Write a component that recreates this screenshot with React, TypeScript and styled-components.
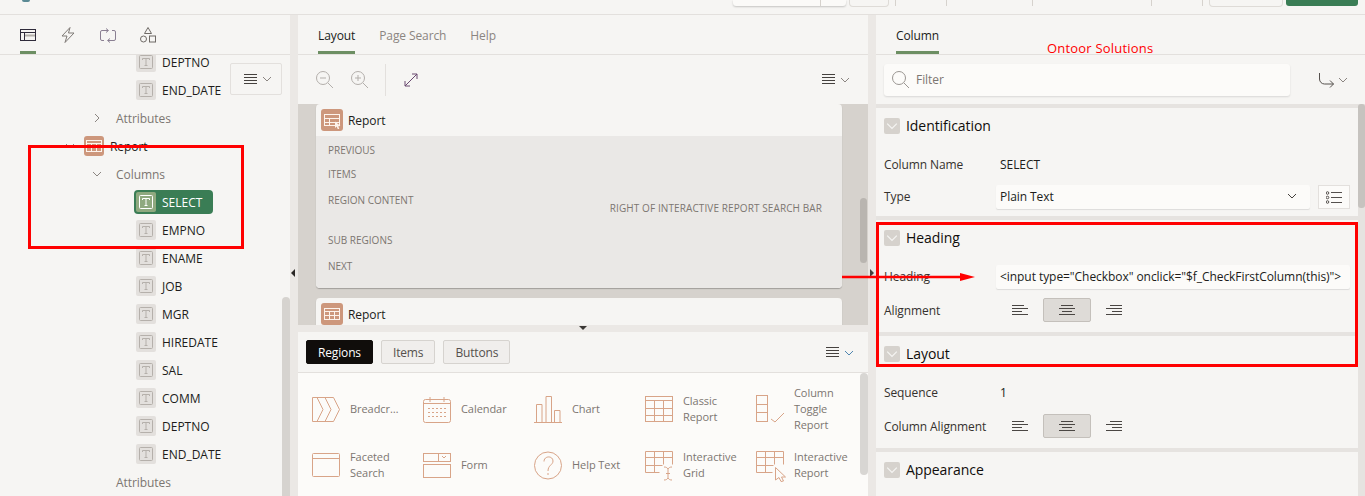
import React from "react";
import styled, { createGlobalStyle } from "styled-components";

const GlobalStyle = createGlobalStyle`
  html, body {
    margin: 0;
    padding: 0;
    background: #f6f5f3;
    font-family: "Open Sans", "Noto Sans", sans-serif;
    letter-spacing: -0.06px;
    overflow: hidden;
  }
  * { box-sizing: border-box; }
`;

const treeColumns = ["ENAME", "JOB", "MGR", "HIREDATE", "SAL", "COMM", "DEPTNO", "END_DATE"];

const TextIcon: React.FC<{ active?: boolean }> = ({ active }) => (
  <TextIconBox $active={active}>
    <svg width="14" height="14" viewBox="0 0 14 14" fill="none">
      <rect x="0.5" y="0.5" width="13" height="13" rx="1" stroke={active ? "#ffffff" : "#b5b0ab"} />
      <path d="M3.5 5V3.5h7V5M7 3.5v7M5.5 10.5h3" stroke={active ? "#ffffff" : "#b5b0ab"} />
    </svg>
  </TextIconBox>
);

const ReportIcon: React.FC<{ small?: boolean; cursor?: boolean }> = ({ small, cursor }) => (
  <ReportBox $small={small}>
    <svg width="16" height="12" viewBox="0 0 16 12" fill="none" stroke="#fdf3ec" overflow="visible">
      <rect x=".5" y=".5" width="15" height="11" />
      {cursor ? (
        <>
          <path d="M.5 4.500h15M.5 8.500h15M5.500 4.500v7" />
          <path d="M11 7.500l5.500 4.500-2.200.3 1 2.700-1.600 0-1-2.500-1.700 1.500z" fill="#fdf3ec" stroke="none" />
        </>
      ) : (
        <path d="M.5 3.500h15M.5 7.500h15M5.500 3.500v8M10.500 3.500v8" />
      )}
    </svg>
  </ReportBox>
);

const Chevron: React.FC<{ dir: "down" | "right"; color?: string; size?: number }> = ({ dir, color = "#8b8581", size = 10 }) => (
  <svg width={size} height={size} viewBox="0 0 10 10" fill="none" stroke={color}>
    {dir === "down" ? <path d="M1 3l4 4 4-4" /> : <path d="M3 1l4 4-4 4" />}
  </svg>
);

const MenuGlyph: React.FC<{ chevron?: string }> = ({ chevron = "#8b8581" }) => (
  <MenuWrap>
    <svg width="13" height="11" viewBox="0 0 13 11" stroke="#45413e" fill="none">
      <path d="M0 .5h13M0 3.5h13M0 6.5h13M0 9.5h13" />
    </svg>
    <Chevron dir="down" color={chevron} />
  </MenuWrap>
);

const AlignIcon: React.FC<{ kind: "left" | "center" | "right" }> = ({ kind }) => {
  const d = {
    left: "M0 .5h12M0 3.5h16M0 6.5h10M0 9.5h16",
    center: "M2 .5h12M0 3.5h16M3 6.5h10M0 9.5h16",
    right: "M4 .5h12M0 3.5h16M6 6.5h10M0 9.5h16",
  }[kind];
  return (
    <svg width="16" height="10" viewBox="0 0 16 10" fill="none" stroke="#4a4643">
      <path d={d} />
    </svg>
  );
};

const AlignGroup: React.FC = () => (
  <AlignWrap>
    <AlignButton><AlignIcon kind="left" /></AlignButton>
    <AlignButton $active><AlignIcon kind="center" /></AlignButton>
    <AlignButton><AlignIcon kind="right" /></AlignButton>
  </AlignWrap>
);

const galleryIcons: Record<string, React.ReactNode> = {
  breadcrumb: (
    <>
      <path d="M.5 3.500h21l6 12-6 12H.5z" />
      <path d="M5 3.500l6 12-6 12M13 3.500l6 12-6 12" />
    </>
  ),
  calendar: (
    <>
      <rect x=".5" y="5.500" width="27" height="23" rx="2" />
      <path d="M7 3v5M21 3v5M.5 9.500h27" />
      <path d="M5 14.500h18M5 18.500h18M5 22.500h18" strokeDasharray="2 2" />
    </>
  ),
  chart: (
    <path d="M0 28.500h28M2.500 28V10.500h5.500V28M12 28V2.500h5.500V28M20.500 28V16.500h5.500V28" />
  ),
  classic: (
    <>
      <rect x=".5" y="2.500" width="27" height="25" />
      <path d="M.5 6.500h27M.5 14.500h27M.5 21.500h27M9.500 6.500v21M18.500 6.500v21" />
    </>
  ),
  toggle: (
    <>
      <rect x=".5" y="1.500" width="11" height="26" />
      <path d="M.5 10.500h11M.5 18.500h11M15 25l4 3 9-9" />
    </>
  ),
  faceted: (
    <>
      <rect x=".5" y="3.500" width="27" height="23" rx="1" />
      <path d="M.5 8.500h27" />
    </>
  ),
  form: (
    <>
      <rect x=".5" y="3.500" width="27" height="8" />
      <path d="M15.500 3.500v8M19 6l2 2 2-2" />
      <rect x=".5" y="14.500" width="27" height="13" />
    </>
  ),
  help: (
    <>
      <circle cx="14" cy="15.500" r="13.500" />
      <path d="M10 11.500c0-6 9-6 9-.5 0 4-5 4-5 10M14 23v2" />
    </>
  ),
  grid: (
    <>
      <path d="M.5 22.500V1.500h27v13M.5 7.500h27M.5 15.500h17M9.500 1.500v21M18.500 1.500v13M.5 22.500h14" />
      <path d="M19 17c2 0 3 .5 4 2 1-1.500 2-2 4-2M19 30c2 0 3-.5 4-2 1 1.500 2 2 4 2M23 19v9M21 23.500h4" />
    </>
  ),
  report: (
    <>
      <path d="M.5 22.500V1.500h27v13M.5 7.500h27M.5 15.500h17M9.500 1.500v21M18.500 1.500v13M.5 22.500h16" />
      <path d="M19.500 17.500l10 9.500h-4l2 4-2.500 .5-2-4-3.500 2.500z" />
    </>
  ),
};

const galleryItems = [
  { icon: "breadcrumb", label: "Breadcrumb", truncate: true },
  { icon: "calendar", label: "Calendar" },
  { icon: "chart", label: "Chart" },
  { icon: "classic", label: "Classic Report" },
  { icon: "toggle", label: "Column Toggle Report" },
  { icon: "faceted", label: "Faceted Search" },
  { icon: "form", label: "Form" },
  { icon: "help", label: "Help Text" },
  { icon: "grid", label: "Interactive Grid" },
  { icon: "report", label: "Interactive Report" },
];

const Section: React.FC<{ title: string; tall?: boolean; children?: React.ReactNode }> = ({ title, tall, children }) => (
  <SectionBox $tall={tall}>
    <SectionHeader>
      <Collapse><Chevron dir="down" color="#f6f5f3" size={12} /></Collapse>
      <SectionTitle>{title}</SectionTitle>
    </SectionHeader>
    {children}
  </SectionBox>
);

export default function App() {
  return (
    <>
      <GlobalStyle />
      <Page>
        <TopBar>
          <LogoBit />
          <Spacer />
          <TopButton $width={113} $left={0} $split />
          <TopButton $width={38} $left={4} $outline />
          <TopSep $left={7} />
          <TopSep $left={50} />
          <TopSep $left={85} />
          <TopSep $left={118} />
          <TopSep $left={50} />
          <TopButton $width={72} $left={7} $outline />
          <TopButton $width={72} $left={4} $primary />
          <TopEnd />
        </TopBar>

        <Workspace>
          <LeftPanel>
            <IconTabs>
              <IconTab $active>
                <svg width="16" height="13" viewBox="0 0 16 13" fill="none" stroke="#2f2b3a">
                  <rect x=".5" y=".5" width="15" height="11" />
                  <path d="M.5 3.500h15M4.500 3.500v8" />
                  <path d="M5 6.500h10" stroke="#b5b0ab" strokeWidth="2" />
                </svg>
              </IconTab>
              <IconTab>
                <svg width="14" height="16" viewBox="0 0 14 16" fill="none" stroke="#7f7a76">
                  <path d="M9 .5L1 9h5l-2 6.500L13 6H7.500z" />
                </svg>
              </IconTab>
              <IconTab>
                <svg width="16" height="15" viewBox="0 0 16 15" fill="none" stroke="#8a7f92">
                  <path d="M4 12.500H2a1.500 1.500 0 0 1-1.500-1.500V4A1.500 1.500 0 0 1 2 2.500h6M6 .5l2.500 2L6 4.500" />
                  <path d="M12 2.500h2A1.500 1.500 0 0 1 15.500 4v7a1.500 1.500 0 0 1-1.500 1.500H8M10 14.500l-2.500-2 2.500-2" />
                </svg>
              </IconTab>
              <IconTab>
                <svg width="16" height="16" viewBox="0 0 16 16" fill="none" stroke="#6f6a66">
                  <path d="M8 .5l3.500 6h-7z" />
                  <circle cx="3.500" cy="12" r="3" />
                  <rect x="9.500" y="9" width="6" height="6" />
                </svg>
              </IconTab>
            </IconTabs>
            <Tree>
              <TreeRow $indent={136}><TextIcon /><ColumnName>DEPTNO</ColumnName></TreeRow>
              <TreeRow $indent={136}><TextIcon /><ColumnName>END_DATE</ColumnName></TreeRow>
              <TreeRow $indent={92}><ChevronSlot><Chevron dir="right" /></ChevronSlot><GroupName>Attributes</GroupName></TreeRow>
              <TreeRow $indent={65}><ReportChevron><Chevron dir="down" /></ReportChevron><ReportIcon small /><TreeReportName>Report</TreeReportName></TreeRow>
              <TreeRow $indent={92}><ChevronSlot><Chevron dir="down" /></ChevronSlot><GroupName>Columns</GroupName></TreeRow>
              <TreeRow $indent={134}>
                <SelectedPill><TextIcon active /><SelectedName>SELECT</SelectedName></SelectedPill>
              </TreeRow>
              <TreeRow $indent={136}><TextIcon /><ColumnName>EMPNO</ColumnName></TreeRow>
              {treeColumns.map((name, i) => (
                <TreeRow key={i} $indent={136}><TextIcon /><ColumnName>{name}</ColumnName></TreeRow>
              ))}
              <TreeRow $indent={116}><GroupName>Attributes</GroupName></TreeRow>
            </Tree>
            <FloatMenu><MenuGlyph /></FloatMenu>
            <TreeScroll />
          </LeftPanel>

          <VSplitter><SplitLeft /></VSplitter>

          <MiddlePanel>
            <TextTabs>
              <TextTab $active>Layout</TextTab>
              <TextTab>Page Search</TextTab>
              <TextTab>Help</TextTab>
            </TextTabs>
            <LayoutToolbar>
              <ZoomIcon>
                <svg width="17" height="17" viewBox="0 0 17 17" fill="none" stroke="#b3afab">
                  <circle cx="7" cy="7" r="6.500" />
                  <path d="M12 12l5 5M4 7h6" />
                </svg>
              </ZoomIcon>
              <ZoomIcon>
                <svg width="17" height="17" viewBox="0 0 17 17" fill="none" stroke="#b3afab">
                  <circle cx="7" cy="7" r="6.500" />
                  <path d="M12 12l5 5M4 7h6M7 4v6" />
                </svg>
              </ZoomIcon>
              <ToolSep />
              <ExpandIcon>
                <svg width="14" height="14" viewBox="0 0 14 14" fill="none" stroke="#6a4a70">
                  <path d="M1 13L13 1M8 1h5v5M1 8v5h5" />
                </svg>
              </ExpandIcon>
              <Spacer />
              <MenuGlyph />
            </LayoutToolbar>
            <Canvas>
              <RegionCard>
                <CardHeader><ReportIcon cursor /><ReportName>Report</ReportName></CardHeader>
                <CardBody>
                  <Slot $height={24}><SlotLabel>PREVIOUS</SlotLabel></Slot>
                  <Slot $height={24}><SlotLabel>ITEMS</SlotLabel></Slot>
                  <ContentSlot>
                    <SlotLabel>REGION CONTENT</SlotLabel>
                    <SearchBarLabel>RIGHT OF INTERACTIVE REPORT SEARCH BAR</SearchBarLabel>
                  </ContentSlot>
                  <Slot $height={28}><SlotLabel>SUB REGIONS</SlotLabel></Slot>
                  <Slot $height={24}><SlotLabel>NEXT</SlotLabel></Slot>
                </CardBody>
              </RegionCard>
              <RegionCard>
                <CardHeader><ReportIcon /><ReportName>Report</ReportName></CardHeader>
              </RegionCard>
              <CanvasScroll />
            </Canvas>
            <HSplitter><SplitDown /></HSplitter>
            <GalleryTabs>
              <GalleryTab $active>Regions</GalleryTab>
              <GalleryTab>Items</GalleryTab>
              <GalleryTab>Buttons</GalleryTab>
              <Spacer />
              <MenuGlyph chevron="#4f86b0" />
            </GalleryTabs>
            <Gallery>
              {galleryItems.map((item) => (
                <GalleryItem key={item.icon}>
                  <GalleryGlyph width="28" height="31" viewBox="0 0 28 31" fill="none" stroke="#d8a488">
                    {galleryIcons[item.icon]}
                  </GalleryGlyph>
                  <GalleryLabel $truncate={item.truncate}>{item.label}</GalleryLabel>
                </GalleryItem>
              ))}
              <GalleryScroll />
            </Gallery>
          </MiddlePanel>

          <VSplitter><SplitRight /></VSplitter>

          <RightPanel>
            <TextTabs>
              <TextTab $active>Column</TextTab>
            </TextTabs>
            <FilterBar>
              <FilterBox>
                <svg width="17" height="17" viewBox="0 0 17 17" fill="none" stroke="#9a9692">
                  <circle cx="7" cy="7" r="6.500" />
                  <path d="M12 12l5 5" />
                </svg>
                <FilterText>Filter</FilterText>
              </FilterBox>
              <GoTo>
                <svg width="15" height="16" viewBox="0 0 15 16" fill="none" stroke="#55504d">
                  <path d="M.5 1v6a5 5 0 0 0 5 5h9M11 8.500l3.500 3.500-3.500 3.500" />
                </svg>
                <Chevron dir="down" />
              </GoTo>
            </FilterBar>
            <Sections>
              <Section title="Identification">
                <PropRows>
                  <PropRow>
                    <PropLabel>Column Name</PropLabel>
                    <PropValue>SELECT</PropValue>
                  </PropRow>
                  <PropRow>
                    <PropLabel>Type</PropLabel>
                    <SelectBox>Plain Text<Chevron dir="down" color="#45413e" /></SelectBox>
                    <ListButton>
                      <svg width="16" height="13" viewBox="0 0 16 13" fill="none" stroke="#55504d">
                        <circle cx="1.500" cy="2" r="1.300" />
                        <circle cx="1.500" cy="6.500" r="1.300" />
                        <circle cx="1.500" cy="11" r="1.300" />
                        <path d="M5 1.500h11M5 6.500h11M5 11.500h11" />
                      </svg>
                    </ListButton>
                  </PropRow>
                </PropRows>
              </Section>
              <Section title="Heading" tall>
                <PropRows>
                  <PropRow>
                    <PropLabel>Heading</PropLabel>
                    <HeadingInput>{'<input type="Checkbox" onclick="$f_CheckFirstColumn(this)">'}</HeadingInput>
                  </PropRow>
                  <SpacedRow>
                    <AlignLabel>Alignment</AlignLabel>
                    <AlignGroup />
                  </SpacedRow>
                </PropRows>
              </Section>
              <Section title="Layout" tall>
                <PropRows>
                  <PropRow>
                    <PropLabel>Sequence</PropLabel>
                    <PropValue>1</PropValue>
                  </PropRow>
                  <SpacedRow>
                    <AlignLabel>Column Alignment</AlignLabel>
                    <AlignGroup />
                  </SpacedRow>
                </PropRows>
              </Section>
              <Section title="Appearance" />
              <SectionsScroll />
            </Sections>
          </RightPanel>
        </Workspace>

        <RedBox $left={28} $top={145} $width={216} $height={104} />
        <RedBox $left={876} $top={222} $width={482} $height={145} />
        <ArrowMark width="136" height="12" viewBox="0 0 136 12">
          <path d="M0 6h120" stroke="#ff0000" strokeWidth="2.5" />
          <path d="M118 2l15 4-15 4z" fill="#ff0000" />
        </ArrowMark>
        <Watermark>Ontoor Solutions</Watermark>
      </Page>
    </>
  );
}

const Page = styled.div`
  position: relative;
  width: 1365px;
  height: 496px;
  overflow: hidden;
  background: #f6f5f3;
  display: flex;
  flex-direction: column;
`;

const TopBar = styled.div`
  height: 15px;
  flex: none;
  display: flex;
  align-items: flex-start;
  border-bottom: 1px solid #e3e0dd;
`;

const LogoBit = styled.div`
  width: 8px;
  height: 2px;
  margin-left: 22px;
  background: #5b8a94;
  border-radius: 0 0 4px 4px;
`;

const Spacer = styled.div`
  flex: 1;
`;

const TopButton = styled.div<{ $width: number; $left: number; $split?: boolean; $primary?: boolean; $outline?: boolean }>`
  width: ${(p) => p.$width}px;
  height: 6px;
  margin-left: ${(p) => p.$left}px;
  background-color: ${(p) => (p.$primary ? "#3a7d55" : p.$outline ? "#f6f5f3" : "#fbfaf8")};
  border-radius: 0 0 3px 3px;
  box-shadow: ${(p) => (p.$outline ? "0 0 0 1px #dedbd7" : p.$primary ? "none" : "0 1px 2px rgba(0, 0, 0, 0.2)")};
  ${(p) => p.$split && "background-image: linear-gradient(#d6d2cd, #d6d2cd); background-size: 1px 100%; background-repeat: no-repeat; background-position: 87px 0;"}
`;

const TopSep = styled.div<{ $left: number }>`
  width: 1px;
  height: 6px;
  margin-left: ${(p) => p.$left}px;
  background: #d6d2cd;
`;

const TopEnd = styled.div`
  width: 7px;
`;

const Workspace = styled.div`
  flex: 1;
  min-height: 0;
  display: grid;
  grid-template-columns: 290px 8px 570px 8px 489px;
`;

const LeftPanel = styled.div`
  position: relative;
  overflow: hidden;
  display: flex;
  flex-direction: column;
`;

const IconTabs = styled.div`
  height: 40px;
  flex: none;
  display: flex;
  padding-left: 20px;
  gap: 24px;
  border-bottom: 1px solid #e3e0dd;
  position: relative;
  z-index: 1;
  background: #f6f5f3;
`;

const IconTab = styled.div<{ $active?: boolean }>`
  width: 16px;
  height: 39px;
  display: flex;
  align-items: center;
  justify-content: center;
  padding-top: 4px;
  border-bottom: 3px solid ${(p) => (p.$active ? "#6d8f63" : "transparent")};
`;

const Tree = styled.div`
  margin-top: -7px;
  display: flex;
  flex-direction: column;
`;

const TreeRow = styled.div<{ $indent: number }>`
  height: 28px;
  flex: none;
  display: flex;
  align-items: center;
  padding-left: ${(p) => p.$indent}px;
`;

const TextIconBox = styled.div<{ $active?: boolean }>`
  width: 20px;
  height: 20px;
  flex: none;
  display: flex;
  align-items: center;
  justify-content: center;
  border-radius: 2px;
  background: ${(p) => (p.$active ? "#8fa97f" : "#e3e0dd")};
`;

const ReportBox = styled.div<{ $small?: boolean }>`
  width: ${(p) => (p.$small ? 20 : 22)}px;
  height: ${(p) => (p.$small ? 20 : 22)}px;
  flex: none;
  display: flex;
  align-items: center;
  justify-content: center;
  border-radius: 3px;
  background: #cd977c;
`;

const ChevronSlot = styled.div`
  width: 10px;
  margin-right: 14px;
  display: flex;
`;

const ReportChevron = styled(ChevronSlot)`
  margin-right: 9px;
`;

const ColumnName = styled.span`
  margin-left: 6px;
  font-size: 12px;
  letter-spacing: 0;
  color: #201c1a;
`;

const GroupName = styled.span`
  font-size: 12px;
  color: #7c7671;
`;

const ReportName = styled.span`
  margin-left: 5px;
  font-size: 12px;
  color: #201c1a;
`;

const TreeReportName = styled(ReportName)`
  margin-left: 6px;
`;

const SelectedPill = styled.div`
  width: 79px;
  height: 24px;
  display: flex;
  align-items: center;
  padding-left: 2px;
  border-radius: 4px;
  background: #3a7d55;
`;

const SelectedName = styled.span`
  margin-left: 6px;
  font-size: 12px;
  letter-spacing: 0;
  color: #ffffff;
`;

const MenuWrap = styled.div`
  display: flex;
  align-items: center;
  gap: 5px;
`;

const FloatMenu = styled.div`
  position: absolute;
  left: 230px;
  top: 48px;
  width: 52px;
  height: 32px;
  padding-left: 3px;
  display: flex;
  align-items: center;
  justify-content: center;
  border: 1px solid #e3e0dd;
  border-radius: 2px;
  background: #f6f5f3;
`;

const TreeScroll = styled.div`
  position: absolute;
  left: 282px;
  top: 282px;
  width: 8px;
  height: 210px;
  border-radius: 4px 4px 0 0;
  background: #d6d3cf;
`;

const VSplitter = styled.div`
  position: relative;
  background: #ebe8e5;
`;

const SplitLeft = styled.div`
  position: absolute;
  left: 1px;
  top: 254px;
  border-top: 4px solid transparent;
  border-bottom: 4px solid transparent;
  border-right: 4px solid #2a2725;
`;

const SplitRight = styled.div`
  position: absolute;
  left: 2px;
  top: 254px;
  border-top: 4px solid transparent;
  border-bottom: 4px solid transparent;
  border-left: 4px solid #45413e;
`;

const MiddlePanel = styled.div`
  display: flex;
  flex-direction: column;
  min-height: 0;
`;

const TextTabs = styled.div`
  height: 40px;
  flex: none;
  display: flex;
  gap: 24px;
  padding-left: 20px;
  border-bottom: 1px solid #e3e0dd;
`;

const TextTab = styled.div<{ $active?: boolean }>`
  height: 39px;
  display: flex;
  align-items: center;
  padding-top: 5px;
  font-size: 12px;
  letter-spacing: -0.1px;
  color: ${(p) => (p.$active ? "#201c1a" : "#8b8581")};
  border-bottom: 3px solid ${(p) => (p.$active ? "#6d8f63" : "transparent")};
`;

const LayoutToolbar = styled.div`
  height: 49px;
  flex: none;
  display: flex;
  align-items: center;
  padding: 0 18px 0 18px;
`;

const ZoomIcon = styled.div`
  width: 17px;
  height: 17px;
  margin-right: 18px;
  display: flex;
`;

const ToolSep = styled.div`
  width: 1px;
  height: 32px;
  margin-left: -1px;
  background: #e3e0dd;
`;

const ExpandIcon = styled.div`
  margin-left: 18px;
  display: flex;
`;

const Canvas = styled.div`
  position: relative;
  height: 221px;
  flex: none;
  overflow: hidden;
  padding-left: 18px;
  display: flex;
  flex-direction: column;
  gap: 10px;
  background: #d6d2cd;
`;

const RegionCard = styled.div`
  width: 526px;
  flex: none;
  border-radius: 4px;
  overflow: hidden;
  background: #f6f5f3;
  box-shadow: 0 1px 1px rgba(0, 0, 0, 0.25);
`;

const CardHeader = styled.div`
  height: 32px;
  display: flex;
  align-items: center;
  padding-left: 5px;
`;

const CardBody = styled.div`
  height: 152px;
  padding: 2px 20px 0 12px;
  background: #eae8e6;
`;

const Slot = styled.div<{ $height: number }>`
  height: ${(p) => p.$height}px;
  display: flex;
  align-items: center;
`;

const ContentSlot = styled.div`
  height: 40px;
  display: flex;
  justify-content: space-between;
  padding-top: 7px;
`;

const SlotLabel = styled.span`
  font-size: 10px;
  line-height: 14px;
  letter-spacing: 0;
  color: #7c7671;
`;

const SearchBarLabel = styled(SlotLabel)`
  margin-top: 8px;
  letter-spacing: 0.1px;
`;

const CanvasScroll = styled.div`
  position: absolute;
  right: 1px;
  top: 94px;
  width: 7px;
  height: 65px;
  border-radius: 4px;
  background: #b9b5b0;
`;

const HSplitter = styled.div`
  position: relative;
  height: 7px;
  flex: none;
  background: #ebe8e5;
`;

const SplitDown = styled.div`
  position: absolute;
  left: 281px;
  top: 1px;
  border-left: 4px solid transparent;
  border-right: 4px solid transparent;
  border-top: 4px solid #3b3835;
`;

const GalleryTabs = styled.div`
  height: 41px;
  flex: none;
  display: flex;
  gap: 8px;
  align-items: flex-start;
  padding: 8px 14px 0 8px;
  border-bottom: 1px solid #e3e0dd;
  & > :last-child {
    margin-top: 7px;
  }
`;

const GalleryTab = styled.div<{ $active?: boolean }>`
  height: 24px;
  padding: 0 11px;
  display: flex;
  align-items: center;
  font-size: 12px;
  letter-spacing: -0.15px;
  border-radius: 2px;
  color: ${(p) => (p.$active ? "#ffffff" : "#55504d")};
  background: ${(p) => (p.$active ? "#100d0b" : "#f0eeec")};
  border: 1px solid ${(p) => (p.$active ? "#100d0b" : "#d6d3cf")};
`;

const Gallery = styled.div`
  position: relative;
  flex: 1;
  display: grid;
  grid-template-columns: repeat(5, 111px);
  grid-auto-rows: 56px;
  padding: 8px 0 0 14px;
  background: #fcfbf9;
`;

const GalleryItem = styled.div`
  display: flex;
  align-items: center;
  gap: 10px;
`;

const GalleryGlyph = styled.svg`
  flex: none;
  overflow: visible;
`;

const GalleryLabel = styled.span<{ $truncate?: boolean }>`
  width: ${(p) => (p.$truncate ? "50px" : "56px")};
  font-size: 11px;
  line-height: 16px;
  color: #7c7671;
  ${(p) => p.$truncate && "white-space: nowrap; overflow: hidden; text-overflow: ellipsis;"}
`;

const GalleryScroll = styled.div`
  position: absolute;
  right: 0;
  top: 0;
  width: 8px;
  height: 102px;
  border-radius: 4px;
  background: #d8d6d3;
`;

const RightPanel = styled.div`
  display: flex;
  flex-direction: column;
  min-height: 0;
`;

const FilterBar = styled.div`
  height: 49px;
  flex: none;
  display: flex;
  align-items: center;
  padding: 0 17px 0 8px;
`;

const FilterBox = styled.div`
  width: 406px;
  height: 32px;
  display: flex;
  align-items: center;
  gap: 7px;
  padding-left: 8px;
  border-radius: 3px;
  background: #fcfbf9;
  box-shadow: 0 1px 2px rgba(0, 0, 0, 0.12);
`;

const FilterText = styled.span`
  font-size: 12px;
  color: #7c7671;
`;

const GoTo = styled.div`
  margin-left: auto;
  display: flex;
  align-items: center;
  gap: 4px;
`;

const Sections = styled.div`
  position: relative;
  flex: 1;
  min-height: 0;
  overflow: hidden;
  padding: 4px 7px 0 0;
  display: flex;
  flex-direction: column;
  gap: 4px;
  background: #e6e3e0;
`;

const SectionBox = styled.div<{ $tall?: boolean }>`
  height: ${(p) => (p.$tall ? 112 : 108)}px;
  flex: none;
  padding: 10px 8px 0;
  background: #f6f5f3;
`;

const SectionHeader = styled.div`
  height: 16px;
  display: flex;
  align-items: center;
  gap: 6px;
`;

const Collapse = styled.div`
  width: 16px;
  height: 16px;
  display: flex;
  align-items: center;
  justify-content: center;
  border-radius: 2px;
  background: #d6d2cd;
`;

const SectionTitle = styled.span`
  padding-bottom: 2px;
  font-size: 14px;
  font-weight: 500;
  color: #100d0b;
`;

const PropRows = styled.div`
  margin-top: 15px;
  display: flex;
  flex-direction: column;
`;

const PropRow = styled.div`
  height: 32px;
  display: flex;
  align-items: center;
`;

const SpacedRow = styled(PropRow)`
  margin-top: 1px;
`;

const PropLabel = styled.span`
  width: 112px;
  flex: none;
  margin-bottom: 2px;
  font-size: 12px;
  letter-spacing: -0.1px;
  color: #35312e;
`;

const AlignLabel = styled(PropLabel)`
  margin-bottom: 0;
`;

const PropValue = styled.span`
  padding-left: 4px;
  margin-bottom: 2px;
  font-size: 12px;
  color: #201c1a;
`;

const SelectBox = styled.div`
  width: 314px;
  height: 24px;
  display: flex;
  align-items: center;
  justify-content: space-between;
  padding: 0 13px 2px 4px;
  font-size: 12px;
  color: #201c1a;
  border-radius: 2px;
  background: #fcfbf9;
  box-shadow: 0 1px 1px rgba(0, 0, 0, 0.1);
`;

const ListButton = styled.div`
  width: 32px;
  height: 24px;
  margin-left: 8px;
  display: flex;
  align-items: center;
  justify-content: center;
  border: 1px solid #e3e0dd;
  background: #fcfbf9;
`;

const HeadingInput = styled.div`
  width: 354px;
  height: 24px;
  display: flex;
  align-items: center;
  padding: 0 0 1px 4px;
  font-size: 12px;
  color: #201c1a;
  white-space: nowrap;
  border-radius: 2px;
  background: #fcfbf9;
  box-shadow: 0 1px 1px rgba(0, 0, 0, 0.1);
`;

const AlignWrap = styled.div`
  display: flex;
`;

const AlignButton = styled.div<{ $active?: boolean }>`
  width: 48px;
  height: 24px;
  margin-right: -1px;
  display: flex;
  align-items: center;
  justify-content: center;
  border-radius: 2px;
  border: 1px solid ${(p) => (p.$active ? "#c4c0bb" : "transparent")};
  background: ${(p) => (p.$active ? "#dedbd7" : "transparent")};
`;

const SectionsScroll = styled.div`
  position: absolute;
  right: 0;
  top: 0;
  width: 7px;
  height: 104px;
  border-radius: 3px;
  background: #c6c3bf;
`;

const RedBox = styled.div<{ $left: number; $top: number; $width: number; $height: number }>`
  position: absolute;
  left: ${(p) => p.$left}px;
  top: ${(p) => p.$top}px;
  width: ${(p) => p.$width}px;
  height: ${(p) => p.$height}px;
  border: 3px solid #ff0000;
  pointer-events: none;
`;

const ArrowMark = styled.svg`
  position: absolute;
  left: 842px;
  top: 271px;
`;

const Watermark = styled.div`
  position: absolute;
  left: 1047px;
  top: 40px;
  font-size: 13px;
  line-height: 16px;
  letter-spacing: 0.2px;
  color: #ff0000;
`;
